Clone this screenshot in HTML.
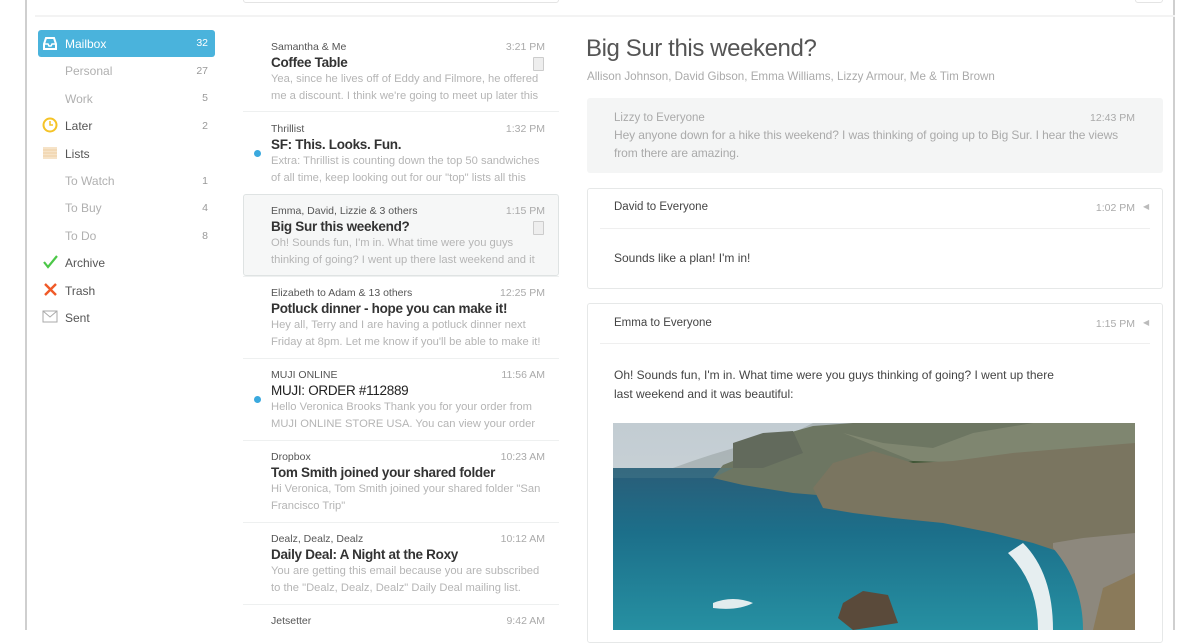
<!DOCTYPE html>
<html><head><meta charset="utf-8"><style>
*{margin:0;padding:0;box-sizing:border-box}
body{width:1200px;height:630px;overflow:hidden;background:#fff;font-family:"Liberation Sans",sans-serif;position:relative}
.a{position:absolute;white-space:nowrap}
.side{font-size:12px;color:#555}
.sub{color:#b0b0b0}
.cnt{font-size:10.5px;color:#999;text-align:right;width:30px}
.snd{font-size:10.5px;color:#555}
.subj{font-size:13.5px;color:#333;font-weight:bold;letter-spacing:-.3px}
.pv{font-size:11.2px;color:#b5b5b5;line-height:17px}
.tm{font-size:10.5px;color:#aaa;text-align:right;width:80px}
.sep{position:absolute;left:243px;width:316px;height:1px;background:#eef0f0}
.dot{position:absolute;left:254px;width:7px;height:7px;border-radius:50%;background:#3aa9de}
.card{position:absolute;left:587px;width:576px;border:1px solid #e6e8e8;border-radius:3px}
</style></head><body>
<div class="a" style="left:25px;top:0;width:2px;height:630px;background:#cfcfcf"></div>
<div class="a" style="left:1173px;top:0;width:2px;height:630px;background:#cfcfcf"></div>
<div class="a" style="left:243px;top:-6px;width:316px;height:9px;border:1px solid #e4e4e4;border-radius:3px"></div>
<div class="a" style="left:1135px;top:-6px;width:28px;height:9px;border:1px solid #e4e4e4;border-radius:3px"></div>
<div class="a" style="left:35px;top:15px;width:1140px;height:2px;background:#f3f3f3"></div>

<!-- sidebar -->
<div class="a" style="left:38px;top:30px;width:177px;height:27px;background:#4ab3dc;border-radius:3px"></div>
<svg class="a" style="left:42px;top:35px" width="16" height="16" viewBox="0 0 16 16"><path d="M4 3h8l2 6v5H2V9z" fill="none" stroke="#fff" stroke-width="2"/><path d="M3 9h3l1 2h2l1-2h3" fill="none" stroke="#fff" stroke-width="1.5"/></svg>
<div class="a side" style="left:65px;top:37px;color:#fff">Mailbox</div><div class="a cnt" style="left:178px;top:37px;color:#fff">32</div>
<div class="a side sub" style="left:65px;top:64px">Personal</div><div class="a cnt" style="left:178px;top:65px">27</div>
<div class="a side sub" style="left:65px;top:92px">Work</div><div class="a cnt" style="left:178px;top:92px">5</div>
<svg class="a" style="left:42px;top:117px" width="16" height="16"><circle cx="8" cy="8" r="6.5" fill="none" stroke="#f5c326" stroke-width="2"/><path d="M8 4v4h3" fill="none" stroke="#f5c326" stroke-width="1.5"/></svg>
<div class="a side" style="left:65px;top:119px">Later</div><div class="a cnt" style="left:178px;top:120px">2</div>
<svg class="a" style="left:42px;top:146px" width="16" height="14"><rect x="1" y="1" width="14" height="12" fill="#f6e3c8"/><path d="M1 4h14M1 7h14M1 10h14" stroke="#efcfa3"/></svg>
<div class="a side" style="left:65px;top:147px">Lists</div>
<div class="a side sub" style="left:65px;top:174px">To Watch</div><div class="a cnt" style="left:178px;top:175px">1</div>
<div class="a side sub" style="left:65px;top:201px">To Buy</div><div class="a cnt" style="left:178px;top:202px">4</div>
<div class="a side sub" style="left:65px;top:229px">To Do</div><div class="a cnt" style="left:178px;top:230px">8</div>
<svg class="a" style="left:42px;top:254px" width="17" height="16"><path d="M2 8l4 5 9-11" fill="none" stroke="#4cc748" stroke-width="2.2"/></svg>
<div class="a side" style="left:65px;top:256px">Archive</div>
<svg class="a" style="left:43px;top:282px" width="15" height="15"><path d="M2 2l11 11M13 2L2 13" stroke="#f05a28" stroke-width="2.4"/></svg>
<div class="a side" style="left:65px;top:284px">Trash</div>
<svg class="a" style="left:42px;top:310px" width="16" height="13"><rect x="1" y="1" width="14" height="11" fill="none" stroke="#aaa"/><path d="M1 1l7 6 7-6" fill="none" stroke="#aaa"/></svg>
<div class="a side" style="left:65px;top:311px">Sent</div>

<!-- list -->
<div class="a" style="left:243px;top:194px;width:316px;height:82px;background:#f6f7f7;border:1px solid #dfe3e3;border-radius:3px"></div>
<div class="sep" style="top:111px"></div><div class="sep" style="top:358px"></div><div class="sep" style="top:440px"></div><div class="sep" style="top:522px"></div><div class="sep" style="top:604px"></div><div class="sep" style="top:276px"></div>

<div class="a snd" style="left:271px;top:41px">Samantha &amp; Me</div><div class="a tm" style="left:465px;top:41px">3:21 PM</div>
<div class="a subj" style="left:271px;top:55px">Coffee Table</div>
<div class="a" style="left:533px;top:57px;width:11px;height:14px;border:1px solid #ccc;background:#eee;border-radius:1px"></div>
<div class="a pv" style="left:271px;top:71px">Yea, since he lives off of Eddy and Filmore, he offered<br>me a discount. I think we're going to meet up later this</div>

<div class="a snd" style="left:271px;top:123px">Thrillist</div><div class="a tm" style="left:465px;top:123px">1:32 PM</div>
<div class="dot" style="top:150px"></div>
<div class="a subj" style="left:271px;top:137px">SF: This. Looks. Fun.</div>
<div class="a pv" style="left:271px;top:153px">Extra: Thrillist is counting down the top 50 sandwiches<br>of all time, keep looking out for our "top" lists all this</div>

<div class="a snd" style="left:271px;top:205px">Emma, David, Lizzie &amp; 3 others</div><div class="a tm" style="left:465px;top:205px">1:15 PM</div>
<div class="a subj" style="left:271px;top:219px">Big Sur this weekend?</div>
<div class="a" style="left:533px;top:221px;width:11px;height:14px;border:1px solid #ccc;background:#eee;border-radius:1px"></div>
<div class="a pv" style="left:271px;top:235px">Oh! Sounds fun, I'm in. What time were you guys<br>thinking of going? I went up there last weekend and it</div>

<div class="a snd" style="left:271px;top:287px">Elizabeth to Adam &amp; 13 others</div><div class="a tm" style="left:465px;top:287px">12:25 PM</div>
<div class="a subj" style="left:271px;top:301px">Potluck dinner - hope you can make it!</div>
<div class="a pv" style="left:271px;top:317px">Hey all, Terry and I are having a potluck dinner next<br>Friday at 8pm. Let me know if you'll be able to make it!</div>

<div class="a snd" style="left:271px;top:369px">MUJI ONLINE</div><div class="a tm" style="left:465px;top:369px">11:56 AM</div>
<div class="dot" style="top:396px"></div>
<div class="a subj" style="left:271px;top:383px;font-weight:normal;color:#222">MUJI: ORDER #112889</div>
<div class="a pv" style="left:271px;top:399px">Hello Veronica Brooks Thank you for your order from<br>MUJI ONLINE STORE USA. You can view your order</div>

<div class="a snd" style="left:271px;top:451px">Dropbox</div><div class="a tm" style="left:465px;top:451px">10:23 AM</div>
<div class="a subj" style="left:271px;top:465px">Tom Smith joined your shared folder</div>
<div class="a pv" style="left:271px;top:481px">Hi Veronica, Tom Smith joined your shared folder "San<br>Francisco Trip"</div>

<div class="a snd" style="left:271px;top:533px">Dealz, Dealz, Dealz</div><div class="a tm" style="left:465px;top:533px">10:12 AM</div>
<div class="a subj" style="left:271px;top:547px">Daily Deal: A Night at the Roxy</div>
<div class="a pv" style="left:271px;top:563px">You are getting this email because you are subscribed<br>to the "Dealz, Dealz, Dealz" Daily Deal mailing list.</div>

<div class="a snd" style="left:271px;top:615px">Jetsetter</div><div class="a tm" style="left:465px;top:615px">9:42 AM</div>

<!-- reading pane -->
<div class="a" style="left:586px;top:35px;font-size:24px;color:#555;letter-spacing:-.4px">Big Sur this weekend?</div>
<div class="a" style="left:587px;top:70px;font-size:11.6px;color:#aaa">Allison Johnson, David Gibson, Emma Williams, Lizzy Armour, Me &amp; Tim Brown</div>
<div class="a" style="left:587px;top:98px;width:576px;height:75px;background:#f4f5f5;border-radius:3px"></div>
<div class="a" style="left:614px;top:112px;font-size:11.5px;color:#aaa">Lizzy to Everyone</div>
<div class="a" style="left:1060px;top:112px;font-size:10.5px;color:#aaa;width:75px;text-align:right">12:43 PM</div>
<div class="a" style="left:614px;top:127px;font-size:12px;color:#aaa;line-height:17.5px;letter-spacing:-.1px">Hey anyone down for a hike this weekend? I was thinking of going up to Big Sur. I hear the views<br>from there are amazing.</div>

<div class="card" style="top:188px;height:101px"></div>
<div class="a" style="left:614px;top:201px;font-size:11.5px;color:#444">David to Everyone</div>
<div class="a" style="left:1060px;top:202px;font-size:10.5px;color:#aaa;width:75px;text-align:right">1:02 PM</div>
<div class="a" style="left:1143px;top:202px;font-size:8px;color:#bbb">◀</div>
<div class="a" style="left:600px;top:228px;width:550px;height:1px;background:#efefef"></div>
<div class="a" style="left:614px;top:251px;font-size:12px;color:#444">Sounds like a plan! I'm in!</div>

<div class="card" style="top:303px;height:340px"></div>
<div class="a" style="left:614px;top:317px;font-size:11.5px;color:#444">Emma to Everyone</div>
<div class="a" style="left:1060px;top:318px;font-size:10.5px;color:#aaa;width:75px;text-align:right">1:15 PM</div>
<div class="a" style="left:1143px;top:318px;font-size:8px;color:#bbb">◀</div>
<div class="a" style="left:600px;top:343px;width:550px;height:1px;background:#efefef"></div>
<div class="a" style="left:614px;top:366px;font-size:12px;color:#444;line-height:19px">Oh! Sounds fun, I'm in. What time were you guys thinking of going? I went up there<br>last weekend and it was beautiful:</div>

<svg class="a" style="left:613px;top:423px" width="522" height="207" viewBox="0 0 522 207">
<defs><linearGradient id="sky" x1="0" y1="0" x2="0" y2="1"><stop offset="0" stop-color="#c2ccd2"/><stop offset="1" stop-color="#d7dde0"/></linearGradient>
<linearGradient id="sea" x1="0" y1="0" x2="0" y2="1"><stop offset="0" stop-color="#2a5d78"/><stop offset=".4" stop-color="#1c6f8a"/><stop offset="1" stop-color="#2690a2"/></linearGradient></defs>
<rect width="522" height="207" fill="url(#sky)"/>
<path d="M60 45 Q100 30 140 20 L180 10 L200 0 L522 0 V60 H60Z" fill="#9aa4a4" opacity=".6"/>
<rect y="45" width="522" height="162" fill="url(#sea)"/>
<path d="M100 55 L110 42 L140 30 L175 10 L200 3 L240 0 L522 0 V100 L420 95 L360 90 L300 80 L240 75 L180 70 L130 62Z" fill="#6d7662"/>
<path d="M230 10 L270 20 L320 25 L360 10 L420 0 L522 0 V60 L470 55 L420 50 L360 40 L300 38 Z" fill="#7f8670"/>
<path d="M240 48 L300 38 L350 40 L360 50 L300 70 L250 65Z" fill="#3f5535"/>
<path d="M200 65 L220 40 L260 28 L300 40 L340 38 L400 30 L460 25 L522 20 V175 L480 160 L450 130 L420 120 L380 110 L330 100 L280 95 L240 90 L210 85 Z" fill="#7a7560"/>
<path d="M120 20 L150 10 L180 8 L190 30 L150 45 L120 45Z" fill="#626a5c"/>
<path d="M440 120 L470 115 L522 110 V207 H470 Q470 160 440 125Z" fill="#8d887d"/>
<path d="M410 120 Q440 150 440 207 H425 Q425 160 395 130Z" fill="#e6eef0"/>
<path d="M230 180 L250 168 L275 172 L285 200 L240 207 L225 195Z" fill="#5a4a3a"/>
<path d="M100 180 Q120 172 140 180 Q125 188 100 185Z" fill="#e2ecee"/>
<path d="M490 165 L522 150 V207 H480Z" fill="#8a7a5a"/>
<path d="M0 45 H120 L100 55 L0 55Z" fill="#4a7c8c" opacity=".4"/>
</svg>
</body></html>
